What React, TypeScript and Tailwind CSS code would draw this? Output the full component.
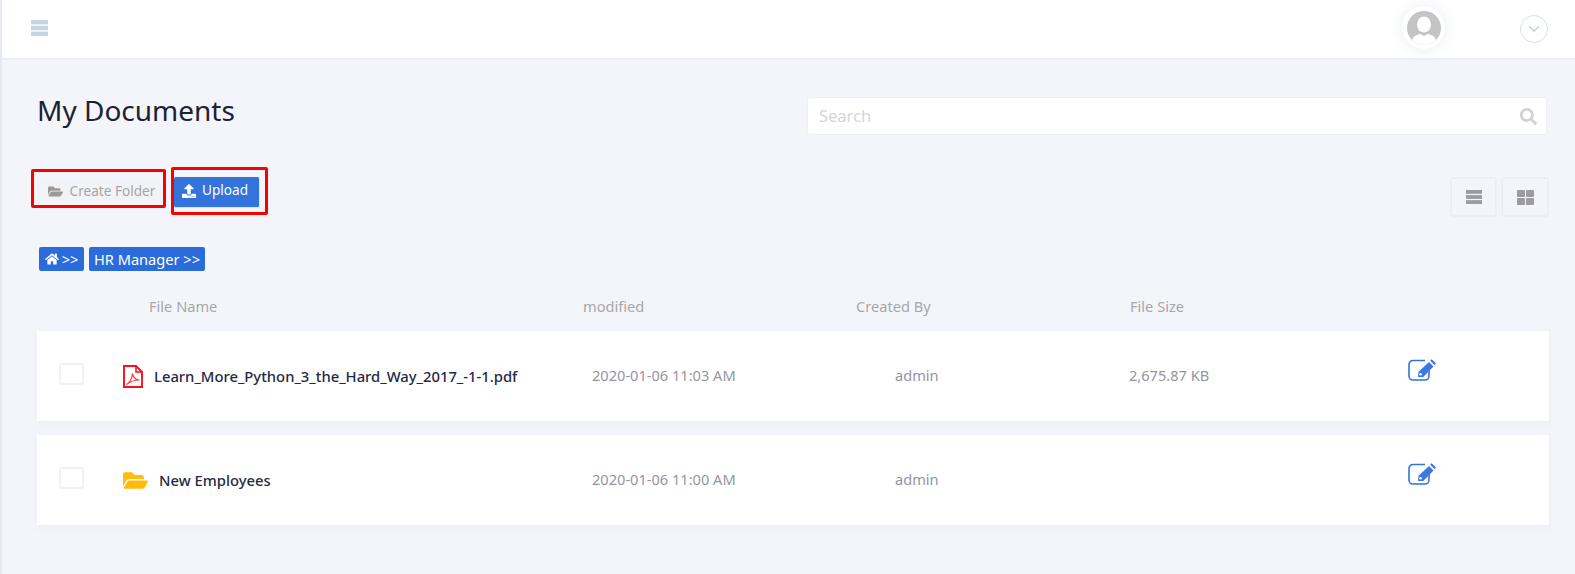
import { ChevronDown } from "lucide-react";
import { FaFolderOpen, FaHome, FaSearch, FaThLarge, FaUpload } from "react-icons/fa";

type Row = {
  name: string;
  kind: "pdf" | "folder";
  modified: string;
  size: string;
};

const rows: Row[] = [
  { name: "Learn_More_Python_3_the_Hard_Way_2017_-1-1.pdf", kind: "pdf", modified: "2020-01-06 11:03 AM", size: "2,675.87 KB" },
  { name: "New Employees", kind: "folder", modified: "2020-01-06 11:00 AM", size: "" },
];

function Avatar() {
  return (
    <div className="flex h-[43px] w-[43px] items-center justify-center rounded-full bg-white shadow-[0_0_14px_rgba(190,200,230,0.35)]">
      <svg width="34" height="34" viewBox="0 0 34 34">
        <defs>
          <clipPath id="avatar-clip">
            <circle cx="17" cy="17" r="17" />
          </clipPath>
        </defs>
        <circle cx="17" cy="17" r="17" fill="#c4c4c4" />
        <g clipPath="url(#avatar-clip)" fill="#fff">
          <ellipse cx="17" cy="13.5" rx="7" ry="8" />
          <path d="M4 34c0-7 4-10 9-11l4 2 4-2c5 1 9 4 9 11z" />
        </g>
      </svg>
    </div>
  );
}

function BarsIcon({ className, width, height }: { className: string; width: number; height: number }) {
  return (
    <svg className={className} width={width} height={height} viewBox="0 0 17 16" preserveAspectRatio="none" fill="currentColor">
      <rect x="0" y="0" width="17" height="4.4" />
      <rect x="0" y="5.8" width="17" height="4.4" />
      <rect x="0" y="11.6" width="17" height="4.4" />
    </svg>
  );
}

function PdfIcon() {
  return (
    <svg width="20" height="23" viewBox="0 0 20 23" fill="none" className="shrink-0">
      <path d="M1 1h12l6 6v15H1z" stroke="#fa0f1e" strokeWidth="1.9" />
      <path d="M13 1v6h6" stroke="#fa0f1e" strokeWidth="1.6" />
      <path d="M3.500 19.500C7 17.500 9.500 12.500 9.500 8.500c1 4 3 6.500 7 6.500-4 0-9 1.500-13 4.500z" stroke="#f7404e" strokeWidth="1.200" />
    </svg>
  );
}

function EditIcon() {
  return (
    <svg width="28" height="22" viewBox="0 0 28 22" fill="none" className="mt-[28px] shrink-0 self-start">
      <path d="M17 1.500H5a4 4 0 0 0-4 4v11.500a4 4 0 0 0 4 4h12a4 4 0 0 0 4-4v-6" stroke="#3273dc" strokeWidth="1.600" />
      <path d="M10 18l.5-5.200L21 3l4.500 4.500L15.300 18z" fill="#3d78e0" />
      <path d="M22.200 1.800 23.700.3 28 4.500l-1.500 1.500z" fill="#3273dc" />
      <circle cx="12.600" cy="15.300" r="1.200" fill="#fff" />
    </svg>
  );
}

export default function App() {
  return (
    <div className="h-[574px] w-[1575px] overflow-hidden border-l-2 border-[#e6e9f2] bg-[#f4f5fa] font-['Noto_Sans',sans-serif]">
      <header className="flex h-[60px] items-center border-b-2 border-[#eceef5] bg-white pl-[29px]">
        <BarsIcon className="mt-[-3px] text-[#c5d5e3]" width={17} height={16} />
        <div className="ml-auto mt-[-3px]">
          <Avatar />
        </div>
        <div className="ml-[75px] mr-[27px] flex h-[28px] w-[28px] items-center justify-center rounded-full border border-[#d5e0ec]">
          <ChevronDown className="text-[#bcd0e2]" size={18} strokeWidth={1.6} />
        </div>
      </header>

      <main className="pl-[35px] pr-[26px]">
        <div className="flex items-start justify-between pt-[37px]">
          <h1 className="mt-[-6px] text-[28px] leading-[38px] text-[#1c2233]">My Documents</h1>
          <div className="mr-[2px] flex h-[38px] w-[740px] items-center justify-between rounded-[3px] border border-[#eff0f5] bg-white pl-[11px] pr-[9px]">
            <span className="text-[16.500px] text-[#d3d5dc]">Search</span>
            <FaSearch className="text-[#d2d2d2]" size={17} />
          </div>
        </div>

        <div className="mt-[42px] flex items-start justify-between">
          <div className="flex h-[31px] items-center">
            <div className="relative ml-px">
              <button className="flex h-[28px] w-[126px] items-center justify-center gap-[7px] rounded-[2px] bg-[#f2f3f7] pb-[3px] pl-px text-[13.600px] text-[#a5a5a9]">
                <FaFolderOpen className="text-[#9c9a94]" size={15} />
                Create Folder
              </button>
              <div className="absolute left-[-7px] top-[-10px] h-[39px] w-[135px] rounded-[2px] border-[3px] border-[#fa0000]" />
            </div>
            <div className="relative ml-[10px]">
              <button className="flex h-[31px] w-[86px] items-center justify-center gap-[6px] rounded-[2px] border-b border-r border-[#dbe3f5] bg-[#3273dc] pb-[3px] pr-[3px] text-[13.600px] text-white">
                <FaUpload size={14} />
                Upload
              </button>
              <div className="absolute left-[-3px] top-[-10px] h-[48px] w-[97px] rounded-[2px] border-[3px] border-[#fa0000]" />
            </div>
          </div>
          <div className="flex gap-[4px]">
            <button className="flex h-[40px] w-[47px] items-center justify-center rounded-[3px] border-2 border-[#edeef3]">
              <BarsIcon className="text-[#9b9ba1]" width={16} height={14} />
            </button>
            <button className="flex h-[40px] w-[48px] items-center justify-center rounded-[3px] border-2 border-[#edeef3]">
              <FaThLarge className="text-[#9b9ba1]" size={17} />
            </button>
          </div>
        </div>

        <div className="ml-[2px] mt-[30px] flex gap-[5px] text-[14.600px] leading-[24px] text-white">
          <span className="flex h-[24px] w-[45px] items-center justify-center gap-[3px] rounded-[2px] bg-[#2b6cdc] pb-px">
            <FaHome size={14} />
            &gt;&gt;
          </span>
          <span className="flex h-[24px] w-[116px] items-center justify-center rounded-[2px] bg-[#2b6cdc] pb-px">HR Manager &gt;&gt;</span>
        </div>

        <div className="mb-[6px] mt-[18px] grid h-[36px] grid-cols-[112px_434px_273px_274px_1fr] items-center text-[14.600px] text-[#a7a7ab]">
          <span />
          <span>File Name</span>
          <span>modified</span>
          <span>Created By</span>
          <span>File Size</span>
        </div>

        <div className="flex flex-col gap-[14px]">
          {rows.map((row) => (
            <div
              key={row.name}
              className="flex h-[90px] items-center bg-white text-[14.600px] shadow-[0_2px_6px_rgba(220,224,240,0.35)]"
            >
              <div className="ml-[22px] mt-[-4px] h-[22px] w-[25px] rounded-[3px] border-2 border-[#f0f2f7]" />
              <div className="ml-[39px] flex w-[469px] items-center">
                {row.kind === "pdf" ? <PdfIcon /> : <FaFolderOpen className="text-[#ffbc0a]" size={25} />}
                <span className={`text-[14.800px] font-medium text-[#1f2a44] ${row.kind === "pdf" ? "ml-[11px]" : "ml-[11px]"}`}>{row.name}</span>
              </div>
              <span className="w-[303px] text-[#9496a3]">{row.modified}</span>
              <span className="w-[234px] text-[#9496a3]">admin</span>
              <span className="w-[279px] text-[#9496a3]">{row.size}</span>
              <EditIcon />
            </div>
          ))}
        </div>
      </main>
    </div>
  );
}
